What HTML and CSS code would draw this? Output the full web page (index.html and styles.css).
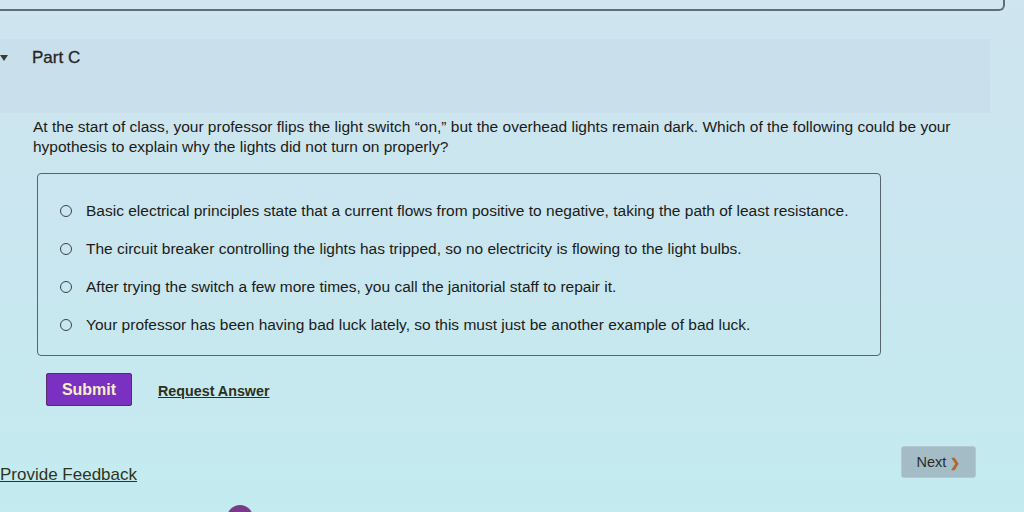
FILE: index.html
```html
<!DOCTYPE html>
<html>
<head>
<meta charset="utf-8">
<link rel="stylesheet" href="styles.css">
</head>
<body>
<div class="page">
  <div class="topbox"></div>
  <div class="band">
    <div class="part"><span class="tri"></span><span class="part-title">Part C</span></div>
  </div>
  <div class="content">
    <p class="question">At the start of class, your professor flips the light switch “on,” but the overhead lights remain dark. Which of the following could be your hypothesis to explain why the lights did not turn on properly?</p>
    <div class="choices">
      <label class="choice"><span class="radio"></span><span>Basic electrical principles state that a current flows from positive to negative, taking the path of least resistance.</span></label>
      <label class="choice"><span class="radio"></span><span>The circuit breaker controlling the lights has tripped, so no electricity is flowing to the light bulbs.</span></label>
      <label class="choice"><span class="radio"></span><span>After trying the switch a few more times, you call the janitorial staff to repair it.</span></label>
      <label class="choice"><span class="radio"></span><span>Your professor has been having bad luck lately, so this must just be another example of bad luck.</span></label>
    </div>
    <div class="actions">
      <button class="submit">Submit</button>
      <a class="request">Request Answer</a>
    </div>
  </div>
  <div class="footer">
    <a class="feedback">Provide Feedback</a>
    <button class="next">Next <span class="chev">&#10095;</span></button>
  </div>
  <div class="dot"></div>
</div>
</body>
</html>
```
FILE: styles.css
```css
html, body {
  margin: 0;
  padding: 0;
}
body {
  width: 1024px;
  height: 512px;
  overflow: hidden;
  background: linear-gradient(180deg, #cfe5f0 0%, #c9e6ef 50%, #c3ecef 100%);
  font-family: "Liberation Sans", Arial, sans-serif;
  color: #1b1b18;
}
.page {
  position: relative;
  height: 512px;
}
.topbox {
  width: 1003px;
  height: 9px;
  border-bottom: 2px solid #5f6d77;
  border-right: 2px solid #5f6d77;
  border-bottom-right-radius: 6px;
}
.band {
  height: 74px;
  margin-top: 28px;
  margin-right: 34px;
  background: #c9dfeb;
  display: flex;
  align-items: flex-start;
}
.part {
  display: flex;
  align-items: center;
  margin-top: 9px;
}
.tri {
  width: 0;
  height: 0;
  border-left: 4px solid transparent;
  border-right: 4px solid transparent;
  border-top: 6px solid #3a3a32;
  margin-right: 24px;
}
.part-title {
  font-size: 17px;
  color: #26261f;
  -webkit-text-stroke: 0.3px #26261f;
}
.content {
  padding-left: 33px;
  margin-top: 4px;
}
.question {
  margin: 0;
  font-size: 15.5px;
  line-height: 20px;
  width: 960px;
}
.choices {
  margin-top: 16px;
  margin-left: 4px;
  width: 822px;
  height: 154px;
  border: 1.5px solid #56646c;
  border-radius: 4px;
  padding: 27px 0 0 20px;
  display: flex;
  flex-direction: column;
  gap: 18px;
}
.choice {
  display: flex;
  align-items: center;
  gap: 14px;
  font-size: 15.5px;
  line-height: 20px;
}
.radio {
  width: 10px;
  height: 10px;
  border: 1.5px solid #3b4248;
  border-radius: 50%;
  flex: none;
  margin-left: 2px;
}
.actions {
  display: flex;
  align-items: center;
  margin-top: 17px;
  margin-left: 13px;
  gap: 26px;
}
.submit {
  width: 86px;
  height: 33px;
  background: #7a31c2;
  border: 1px solid #5a2a6a;
  border-radius: 2px;
  color: #f4f0c4;
  font-family: "Liberation Sans", Arial, sans-serif;
  font-weight: bold;
  font-size: 16px;
  padding: 0;
}
.request {
  font-size: 14.3px;
  font-weight: bold;
  color: #2e3016;
  text-decoration: underline;
  margin-top: 2px;
}
.footer {
  display: flex;
  justify-content: space-between;
  align-items: flex-end;
  margin-top: 40px;
  padding-right: 48px;
}
.feedback {
  font-size: 17px;
  color: #30341c;
  text-decoration: underline;
  margin-bottom: 3px;
}
.next {
  width: 75px;
  height: 32px;
  background: #a3bcc5;
  border: 1px solid #b3c8cf;
  border-radius: 3px;
  color: #2b2b2b;
  font-family: "Liberation Sans", Arial, sans-serif;
  font-size: 14.5px;
  padding: 0;
  margin-bottom: 10px;
}
.chev {
  color: #b2642a;
  font-size: 12px;
  font-weight: bold;
}
.dot {
  position: absolute;
  left: 227px;
  top: 505px;
  width: 26px;
  height: 26px;
  border-radius: 50%;
  background: #7a3a8c;
}
```
